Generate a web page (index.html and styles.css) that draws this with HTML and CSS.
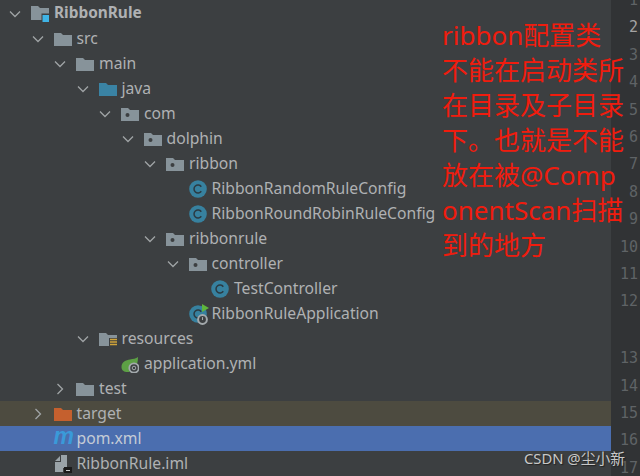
FILE: index.html
```html
<!DOCTYPE html>
<html lang="zh-CN">
<head>
    <meta charset="UTF-8">
    <title>RibbonRule</title>
    <link rel="stylesheet" href="styles.css">
</head>
<body>

    <!-- Shared icons -->
    <svg class="defs" width="0" height="0">
        <symbol id="chev-down" viewBox="0 0 12 12"><path d="M1 3.5 L6 8.5 L11 3.5" fill="none" stroke="#a0a4a6" stroke-width="1.3"/></symbol>
        <symbol id="chev-right" viewBox="0 0 12 12"><path d="M3.5 1 L8.5 6 L3.5 11" fill="none" stroke="#a0a4a6" stroke-width="1.3"/></symbol>
        <symbol id="folder" viewBox="0 0 18 18"><path d="M0 3 H7 L9 5 H18 V16 H0 Z" fill="#87939a"/></symbol>
        <symbol id="package" viewBox="0 0 18 18"><path d="M0 3 H7 L9 5 H18 V16 H0 Z" fill="#87939a"/><circle cx="6.5" cy="10" r="2" fill="#3c3f41"/></symbol>
        <symbol id="source" viewBox="0 0 18 18"><path d="M0 3 H7 L9 5 H18 V16 H0 Z" fill="#3a83a4"/></symbol>
        <symbol id="excluded" viewBox="0 0 18 18"><path d="M0 3 H7 L9 5 H18 V16 H0 Z" fill="#c5602e"/></symbol>
        <symbol id="module" viewBox="0 0 18 18"><path d="M0 1 H7 L9 3 H18 V15 H0 Z" fill="#87939a"/><rect x="10.5" y="8.500" width="8" height="8" fill="#3c3f41"/><rect x="11.500" y="10" width="7" height="7" fill="#3fb4e6"/></symbol>
        <symbol id="resources" viewBox="0 0 18 18"><path d="M0 3 H7 L9 5 H18 V16 H0 Z" fill="#87939a"/><rect x="10" y="8" width="8" height="10" fill="#3c3f41"/><path d="M11 9.500 H18 M11 12 H18 M11 14.500 H18" stroke="#d0a43a" stroke-width="1.500"/></symbol>
        <symbol id="class" viewBox="0 0 18 18"><circle cx="9" cy="9" r="8.800" fill="#37819f"/><path d="M12.300 6.700 A4 4 0 1 0 12.300 11.300" fill="none" stroke="#2b3a42" stroke-width="1.500"/></symbol>
        <symbol id="yml" viewBox="0 0 18 18"><path d="M0.500 12 C0.500 7 5 5 9 4.500 C12 4 15 3.500 17 2 C17 7 16 10 14 12 L8 17 C4 17.500 0.500 16 0.500 12 Z" fill="#5da045"/><circle cx="13" cy="13" r="4.700" fill="#3c3f41" stroke="#a3a9ac" stroke-width="1.800"/><circle cx="13" cy="13" r="1.800" fill="none" stroke="#a3a9ac"/></symbol>
        <symbol id="iml" viewBox="0 0 18 18"><path d="M1 6 L6 1 V6 Z M7 0 H13 V13 H9 V17 H1 V7 H7 Z" fill="#9aa3a8"/><rect x="10" y="12" width="8" height="6" fill="#1a1a1a"/><rect x="12" y="15" width="4" height="1" fill="#cccccc"/></symbol>
    </svg>

    <div class="ide">
        <!-- Project tree -->
        <div class="tree">
            <div class="row d0"><svg class="toggle"><use href="#chev-down"/></svg><svg class="icon"><use href="#module"/></svg><span class="name root">RibbonRule</span></div>
            <div class="row d1"><svg class="toggle"><use href="#chev-down"/></svg><svg class="icon"><use href="#folder"/></svg><span class="name">src</span></div>
            <div class="row d2"><svg class="toggle"><use href="#chev-down"/></svg><svg class="icon"><use href="#folder"/></svg><span class="name">main</span></div>
            <div class="row d3"><svg class="toggle"><use href="#chev-down"/></svg><svg class="icon"><use href="#source"/></svg><span class="name">java</span></div>
            <div class="row d4"><svg class="toggle"><use href="#chev-down"/></svg><svg class="icon"><use href="#package"/></svg><span class="name">com</span></div>
            <div class="row d5"><svg class="toggle"><use href="#chev-down"/></svg><svg class="icon"><use href="#package"/></svg><span class="name">dolphin</span></div>
            <div class="row d6"><svg class="toggle"><use href="#chev-down"/></svg><svg class="icon"><use href="#package"/></svg><span class="name">ribbon</span></div>
            <div class="row d7"><span class="toggle"></span><svg class="icon"><use href="#class"/></svg><span class="name">RibbonRandomRuleConfig</span></div>
            <div class="row d7"><span class="toggle"></span><svg class="icon"><use href="#class"/></svg><span class="name">RibbonRoundRobinRuleConfig</span></div>
            <div class="row d6"><svg class="toggle"><use href="#chev-down"/></svg><svg class="icon"><use href="#package"/></svg><span class="name">ribbonrule</span></div>
            <div class="row d7"><svg class="toggle"><use href="#chev-down"/></svg><svg class="icon"><use href="#package"/></svg><span class="name">controller</span></div>
            <div class="row d8"><span class="toggle"></span><svg class="icon"><use href="#class"/></svg><span class="name">TestController</span></div>
            <div class="row d7">
                <span class="toggle"></span>
                <span class="icon-stack">
                    <svg class="icon"><use href="#class"/></svg>
                    <svg class="badge-run" viewBox="0 0 8 8"><path d="M1 0 L8 4 L1 8 Z" fill="#5fb63c"/></svg>
                    <svg class="badge-power" viewBox="0 0 10 10"><circle cx="5" cy="5" r="4" fill="#3c3f41" stroke="#a3a9ac" stroke-width="1.800"/><path d="M5 2.800 V5.500" stroke="#a3a9ac"/></svg>
                </span>
                <span class="name">RibbonRuleApplication</span>
            </div>
            <div class="row d3"><svg class="toggle"><use href="#chev-down"/></svg><svg class="icon"><use href="#resources"/></svg><span class="name">resources</span></div>
            <div class="row d4"><span class="toggle"></span><svg class="icon"><use href="#yml"/></svg><span class="name">application.yml</span></div>
            <div class="row d2"><svg class="toggle"><use href="#chev-right"/></svg><svg class="icon"><use href="#folder"/></svg><span class="name">test</span></div>
            <div class="row d1 ignored"><svg class="toggle"><use href="#chev-right"/></svg><svg class="icon"><use href="#excluded"/></svg><span class="name">target</span></div>
            <div class="row d1 selected"><span class="toggle"></span><span class="maven">m</span><span class="name">pom.xml</span></div>
            <div class="row d1"><span class="toggle"></span><svg class="icon"><use href="#iml"/></svg><span class="name">RibbonRule.iml</span></div>
        </div>

        <!-- Line numbers -->
        <div class="gutter">
            <span>1</span>
            <span class="current">2</span>
            <span>3</span>
            <span>4</span>
            <span>5</span>
            <span>6</span>
            <span>7</span>
            <span>8</span>
            <span>9</span>
            <span>10</span>
            <span>11</span>
            <span class="fold-gap">12</span>
            <span>13</span>
            <span>14</span>
            <span>15</span>
            <span>16</span>
            <span>17</span>
        </div>
    </div>

    <!-- Annotation pasted over the screenshot -->
    <div class="note">
        <div>ribbon配置类</div>
        <div>不能在启动类所</div>
        <div>在目录及子目录</div>
        <div>下。也就是不能</div>
        <div>放在被@Comp</div>
        <div>onentScan扫描</div>
        <div>到的地方</div>
    </div>

    <div class="watermark">CSDN @尘小新</div>

</body>
</html>
```

FILE: styles.css
```css
html, body {
    margin: 0;
    padding: 0;
}

body {
    width: 640px;
    height: 476px;
    overflow: hidden;
    background-color: #3c3f41;
    position: relative;
    font-family: "Noto Sans", "Noto Sans CJK SC", sans-serif;
}

.defs {
    position: absolute;
}

.ide {
    display: flex;
    height: 476px;
}

.tree {
    width: 611px;
    padding-top: 1px;
}

.row {
    display: flex;
    align-items: center;
    height: 25px;
    color: #afb1b3;
    font-size: 15.7px;
}

.d0 { padding-left: 7px; }
.d1 { padding-left: 29.5px; }
.d2 { padding-left: 52px; }
.d3 { padding-left: 74.5px; }
.d4 { padding-left: 97px; }
.d5 { padding-left: 119.5px; }
.d6 { padding-left: 142px; }
.d7 { padding-left: 164.5px; }
.d8 { padding-left: 187px; }

.name {
    margin-top: -2px;
}

.ignored {
    background-color: #4d4b40;
}

.selected {
    background-color: #4b6eaf;
    color: #c4cbd6;
}

.toggle {
    width: 12px;
    height: 12px;
    margin-left: 2px;
    margin-right: 10px;
    flex-shrink: 0;
}

.icon {
    width: 18px;
    height: 18px;
    margin-right: 5px;
    flex-shrink: 0;
}

.icon-stack {
    position: relative;
    display: flex;
}

.badge-run {
    position: absolute;
    left: 12px;
    top: -1px;
    width: 8px;
    height: 8px;
}

.badge-power {
    position: absolute;
    left: 8px;
    top: 9px;
    width: 11px;
    height: 11px;
}

.maven {
    width: 23px;
    font-family: "Liberation Sans", sans-serif;
    font-size: 23px;
    font-weight: bold;
    font-style: italic;
    line-height: 23px;
    color: #3a9ad9;
    margin-top: -5px;
}

.root {
    font-weight: bold;
    font-size: 15.4px;
}

.gutter {
    width: 29px;
    background-color: #313335;
    color: #5f6366;
    font-family: "DejaVu Sans Mono", monospace;
    font-size: 15px;
    display: flex;
    flex-direction: column;
    margin-top: -13px;
}

.gutter span {
    height: 27.4px;
    line-height: 27.4px;
    text-align: right;
    padding-right: 2px;
    flex-shrink: 0;
}

.gutter .current {
    color: #a4a3a3;
}

.gutter .fold-gap {
    margin-bottom: 29.5px;
}

.note {
    position: absolute;
    left: 442px;
    top: 18px;
    color: #f01c0e;
    font-size: 26px;
    line-height: 35px;
    white-space: nowrap;
}

.watermark {
    position: absolute;
    left: 524px;
    top: 449px;
    color: #c8c8c8;
    font-size: 14.8px;
    line-height: 18px;
    text-shadow: 1px 1px 1px #222222;
    white-space: nowrap;
}
```
